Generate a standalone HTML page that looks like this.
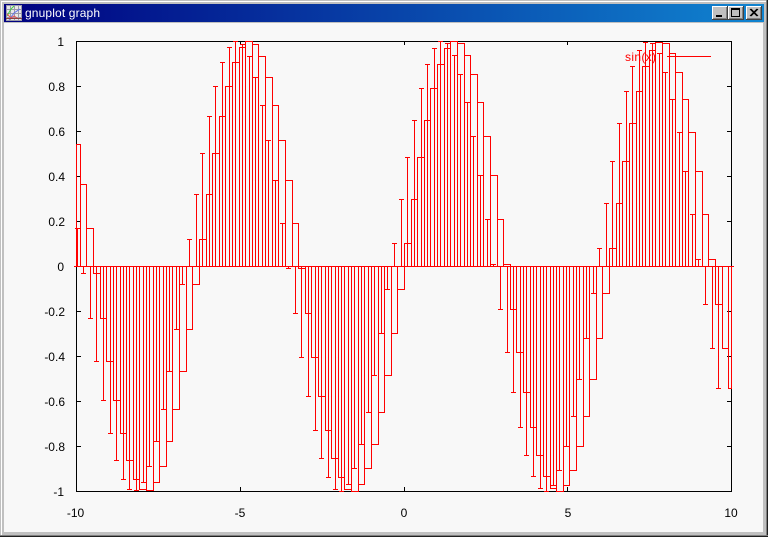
<!DOCTYPE html>
<html>
<head>
<meta charset="utf-8">
<style>
html,body{margin:0;padding:0;width:768px;height:537px;overflow:hidden;background:#c0c0c0}
svg{position:absolute;left:0;top:0;display:block}
text{font-family:"Liberation Sans",sans-serif;font-size:12px}
</style>
</head>
<body>
<svg id="s" width="768" height="537" viewBox="0 0 768 537" xmlns="http://www.w3.org/2000/svg">
<defs>
<linearGradient id="g" x1="0" x2="1" y1="0" y2="0"><stop offset="0" stop-color="#000080"/><stop offset="1" stop-color="#1084d0"/></linearGradient>
</defs>
<rect x="0" y="0" width="768" height="537" fill="#c0c0c0"/>
<rect x="1" y="1" width="765" height="1" fill="#fff"/>
<rect x="1" y="1" width="1" height="534" fill="#fff"/>
<rect x="766" y="0" width="1" height="537" fill="#808080"/>
<rect x="767" y="0" width="1" height="537" fill="#202020"/>
<rect x="0" y="535" width="768" height="1" fill="#808080"/>
<rect x="0" y="536" width="768" height="1" fill="#202020"/>
<rect x="4" y="4" width="760" height="18" fill="url(#g)"/>
<rect x="4" y="23" width="759" height="509" fill="#f8f8f8"/>

<!-- title icon -->
<g shape-rendering="crispEdges">
<rect x="6" y="5" width="16" height="16" fill="#e8e8e8"/>
<path d="M6.5 5.5H21.5V20.5H6.5Z M10.5 5V21 M14.5 5V21 M18.5 5V21 M6 9.5H22 M6 13.5H22 M6 17.5H22" fill="none" stroke="#9a9aa8"/>
</g>
<path d="M7 16L11 9L14 6" fill="none" stroke="#40d040"/>
<path d="M9 20L14 13L20 9" fill="none" stroke="#6070e8"/>
<path d="M7 14L11 18L14 16L17 18" fill="none" stroke="#e85050"/>
<rect x="6" y="18" width="16" height="1" fill="#904040"/>

<text x="25" y="17" fill="#fff" textLength="75">gnuplot graph</text>

<!-- window buttons -->
<g shape-rendering="crispEdges">
<rect x="712" y="6" width="16" height="14" fill="#404040"/><rect x="712" y="6" width="15" height="13" fill="#fff"/><rect x="713" y="7" width="14" height="12" fill="#808080"/><rect x="713" y="7" width="13" height="11" fill="#c0c0c0"/>
<rect x="716" y="15" width="6" height="2" fill="#000"/>
<rect x="728" y="6" width="16" height="14" fill="#404040"/><rect x="728" y="6" width="15" height="13" fill="#fff"/><rect x="729" y="7" width="14" height="12" fill="#808080"/><rect x="729" y="7" width="13" height="11" fill="#c0c0c0"/>
<path d="M731.5 9.5H739.5V16.5H731.5Z M731 8.5H740" fill="none" stroke="#000"/>
<rect x="746" y="6" width="16" height="14" fill="#404040"/><rect x="746" y="6" width="15" height="13" fill="#fff"/><rect x="747" y="7" width="14" height="12" fill="#808080"/><rect x="747" y="7" width="13" height="11" fill="#c0c0c0"/>
</g>
<path d="M750 9L757 16M751 9L758 16M757 9L750 16M758 9L751 16" fill="none" stroke="#000" stroke-width="1"/>

<!-- axes -->
<g shape-rendering="crispEdges" fill="none" stroke="#000">
<path d="M76.5 41.5H731.5V491.5H76.5Z"/>
<path d="M76 86.5H81M76 131.5H81M76 176.5H81M76 221.5H81M76 266.5H81M76 311.5H81M76 356.5H81M76 401.5H81M76 446.5H81"/>
<path d="M727 86.5H731M727 131.5H731M727 176.5H731M727 221.5H731M727 266.5H731M727 311.5H731M727 356.5H731M727 401.5H731M727 446.5H731"/>
<path d="M240.5 41V45M404.5 41V45M567.5 41V45M240.5 487V491M404.5 487V491M567.5 487V491"/>
</g>

<g fill="#000" text-anchor="end">
<text x="64" y="46">1</text>
<text x="65" y="91">0.8</text>
<text x="65" y="136">0.6</text>
<text x="65" y="181">0.4</text>
<text x="65" y="226">0.2</text>
<text x="64" y="271">0</text>
<text x="65" y="316">-0.2</text>
<text x="65" y="361">-0.4</text>
<text x="65" y="406">-0.6</text>
<text x="65" y="451">-0.8</text>
<text x="64" y="496">-1</text>
</g>
<g fill="#000" text-anchor="middle">
<text x="75.5" y="517">-10</text>
<text x="240" y="517">-5</text>
<text x="404" y="517">0</text>
<text x="568" y="517">5</text>
<text x="731" y="517">10</text>
</g>

<path id="p" fill="none" stroke="#ff0000" stroke-width="1" shape-rendering="crispEdges" d=""></path>
<text x="625" y="61" fill="#ff0000" textLength="31">sin(x)</text>
</svg>
<script>
(function(){
  var d = "";
  var step = 20 / 99;
  var pxStep = 32.75 * step;
  function r(v){ return Math.round(v) + 0.5; }
  for (var k = 0; k <= 99; k++) {
    var v = -10 + step * k;
    var xc = 404 + 32.75 * v;
    var l = Math.max(76, xc - pxStep / 2), rr = Math.min(731, xc + pxStep / 2);
    var y = r(266 - 225 * Math.sin(v));
    d += "M" + r(l) + " 266.5V" + y + "H" + r(rr) + "V266.5";
    if (k >= 2) {
      var xi = r(xc - 2 * pxStep);
      d += "M" + xi + " 266.5V" + y + "M" + (xi - 2.5) + " " + y + "H" + (xi + 2.5);
    }
  }
  d += "M74 266.5H734M667 56.5H711";
  document.getElementById("p").setAttribute("d", d);
})();
</script>
</body>
</html>
